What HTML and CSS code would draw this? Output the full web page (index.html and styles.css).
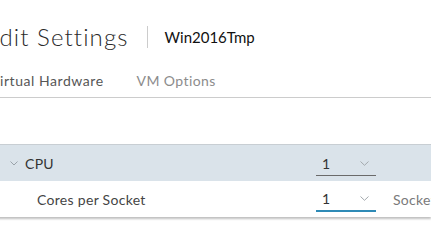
FILE: index.html
```html
<!DOCTYPE html>
<html>
<head>
<meta charset="utf-8">
<link rel="stylesheet" href="styles.css">
</head>
<body>
<div class="page">
  <header class="header">
    <h1 class="title">Edit Settings</h1>
    <span class="divider"></span>
    <span class="vm-name">Win2016Tmp</span>
  </header>
  <nav class="tabs">
    <span class="tab active">Virtual Hardware</span>
    <span class="tab">VM Options</span>
  </nav>
  <div class="table">
    <div class="row row-head">
      <div class="label">
        <svg class="caret" width="8" height="5" viewBox="0 0 8 5"><path d="M0.5 0.5 L4 4 L7.5 0.5" fill="none" stroke="#9aa3aa" stroke-width="1"/></svg>
        <span>CPU</span>
      </div>
      <div class="select">
        <span>1</span>
        <svg class="sel-caret" width="9" height="5" viewBox="0 0 9 5"><path d="M0.5 0.5 L4.5 4.3 L8.5 0.5" fill="none" stroke="#a3a9ad" stroke-width="1"/></svg>
      </div>
      <div class="extra"></div>
    </div>
    <div class="row row-sub">
      <div class="label sub">Cores per Socket</div>
      <div class="select focus">
        <span>1</span>
        <svg class="sel-caret" width="9" height="5" viewBox="0 0 9 5"><path d="M0.5 0.5 L4.5 4.3 L8.5 0.5" fill="none" stroke="#a3a9ad" stroke-width="1"/></svg>
      </div>
      <div class="extra">Sockets</div>
    </div>
  </div>
</div>
</body>
</html>
```

FILE: styles.css
```css
html, body {
  margin: 0;
  padding: 0;
  background: #ffffff;
  overflow: hidden;
}
body {
  width: 431px;
  height: 226px;
  font-family: "Lato", "Noto Sans", sans-serif;
  color: #333333;
}
.page {
  margin-left: -15px;
  width: 446px;
}
.header {
  display: flex;
  align-items: center;
  height: 38px;
  padding-top: 18px;
}
.title {
  margin: 0;
  font-size: 24px;
  font-weight: 300;
  color: #2a2a2a;
  letter-spacing: 1.1px;
  line-height: 38px;
}
.divider {
  width: 1px;
  height: 22px;
  background: #cccccc;
  margin: 0 17px 0 18px;
}
.vm-name {
  font-size: 15px;
  color: #111111;
  letter-spacing: 0;
}
.tabs {
  display: flex;
  gap: 33px;
  height: 33px;
  align-items: center;
  margin-top: 8px;
  padding-left: 5px;
  border-bottom: 1px solid #cccccc;
}
.tab {
  font-size: 14px;
  color: #8c8c8c;
  letter-spacing: 0.4px;
}
.tab.active {
  color: #565656;
  letter-spacing: 0.55px;
}
.table {
  margin-top: 46px;
  border-top: 1px solid #c8ced3;
  box-shadow: 0 2px 2px rgba(0,0,0,0.25);
}
.row {
  display: grid;
  grid-template-columns: 331px 60px auto;
  align-items: center;
  height: 36px;
  font-size: 14px;
  letter-spacing: 0.3px;
}
.row-head {
  background: #dae3ea;
}
.row-sub {
  background: #ffffff;
}
.label {
  display: flex;
  align-items: center;
  padding-left: 25px;
  color: #333333;
}
.label .caret {
  margin-right: 7px;
}
.label.sub {
  padding-left: 52px;
  color: #454545;
}
.select {
  display: flex;
  align-items: center;
  justify-content: space-between;
  height: 24px;
  margin-top: 1px;
  padding: 0 7px 0 6px;
  border-bottom: 1px solid #6a6a6a;
  color: #333333;
}
.select.focus {
  border-bottom: 2px solid #2e8ab6;
  height: 23px;
}
.sel-caret {
  display: block;
}
.extra {
  padding-left: 17px;
  color: #7a7a7a;
  white-space: nowrap;
}
```
